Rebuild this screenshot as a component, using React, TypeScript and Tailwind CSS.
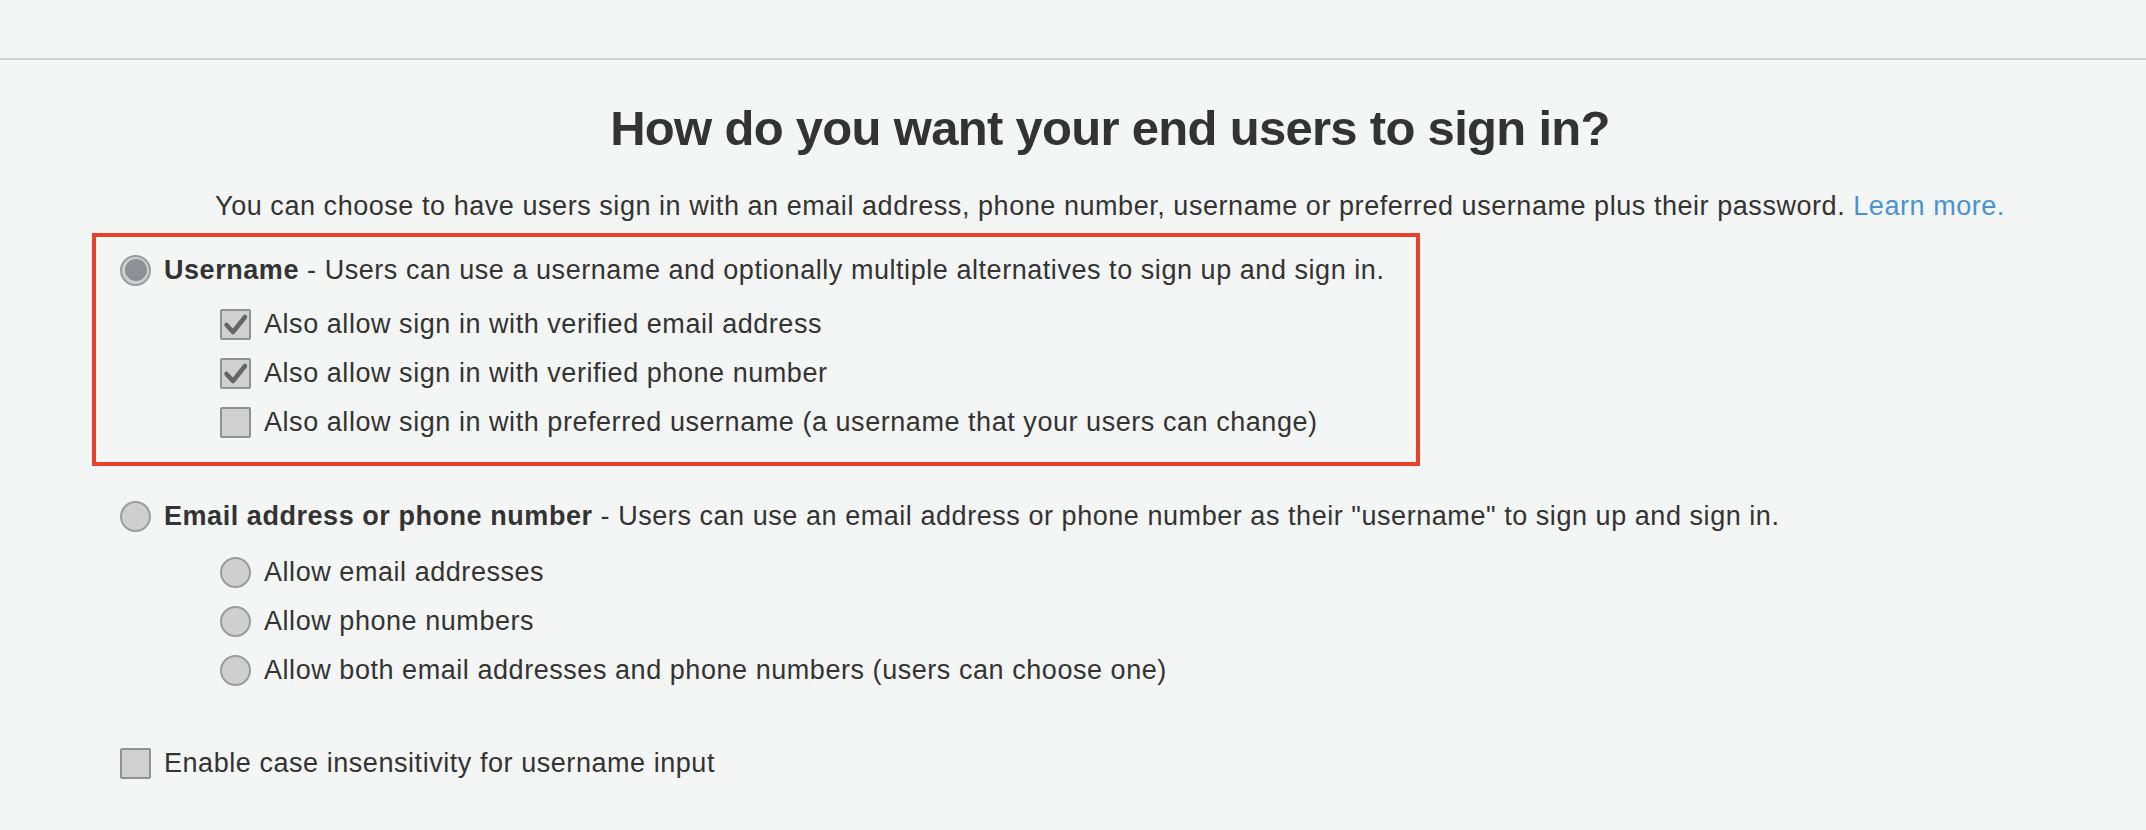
import React from "react";

function Radio({ checked = false }: { checked?: boolean }) {
  return (
    <div className="w-[31px] h-[31px] shrink-0 rounded-full border-2 border-[#9a9c9e] bg-[#cfcfcf] flex items-center justify-center">
      {checked && <div className="w-[22px] h-[22px] rounded-full bg-[#8d9195]" />}
    </div>
  );
}

function Checkbox({ checked = false }: { checked?: boolean }) {
  return (
    <div className="w-[31px] h-[31px] shrink-0 rounded-[2px] border-2 border-[#8f9193] bg-[#d0d0d0] flex items-center justify-center">
      {checked && (
        <svg width="27" height="27" viewBox="0 0 27 27">
          <path d="M4.5 14 L11 21 L23 6" fill="none" stroke="#666" strokeWidth="4.5" strokeLinecap="round" strokeLinejoin="round" />
        </svg>
      )}
    </div>
  );
}

function Row({ control, children }: { control: React.ReactNode; children: React.ReactNode }) {
  return (
    <div className="h-[40px] flex items-center gap-[13px]">
      {control}
      <span className="whitespace-nowrap">{children}</span>
    </div>
  );
}

export default function App() {
  return (
    <div
      className="min-h-screen w-full bg-[#f4f6f5] text-[#333] text-[27px] tracking-[0.55px]"
      style={{ fontFamily: '"Liberation Sans", Arial, Helvetica, sans-serif' }}
    >
      <div className="h-[58px]" />
      <div className="h-[2px] bg-[#cfd0d0]" />
      <div className="pl-[74px] text-center">
        <h1 className="mt-[40px] text-[49px] leading-[56px] font-bold tracking-[-0.7px]">How do you want your end users to sign in?</h1>
        <p className="mt-[35px] leading-[30px]">
          You can choose to have users sign in with an email address, phone number, username or preferred username plus their password.{" "}
          <span className="text-[#4a93d2]">Learn more.</span>
        </p>
      </div>
      <div className="pl-[92px] pb-[40px]">
        <div className="mt-[12px] w-[1328px] border-4 border-[#e8412c] pl-[24px] pt-[13px] pb-[20px]">
          <Row control={<Radio checked />}>
            <b>Username</b> - Users can use a username and optionally multiple alternatives to sign up and sign in.
          </Row>
          <div className="mt-[14px] pl-[100px] flex flex-col gap-[9px]">
            <Row control={<Checkbox checked />}>Also allow sign in with verified email address</Row>
            <Row control={<Checkbox checked />}>Also allow sign in with verified phone number</Row>
            <Row control={<Checkbox />}>Also allow sign in with preferred username (a username that your users can change)</Row>
          </div>
        </div>
        <div className="pl-[28px]">
          <div className="mt-[30px]">
            <Row control={<Radio />}>
              <b>Email address or phone number</b> - Users can use an email address or phone number as their "username" to sign up and sign in.
            </Row>
          </div>
          <div className="mt-[16px] pl-[100px] flex flex-col gap-[9px]">
            <Row control={<Radio />}>Allow email addresses</Row>
            <Row control={<Radio />}>Allow phone numbers</Row>
            <Row control={<Radio />}>Allow both email addresses and phone numbers (users can choose one)</Row>
          </div>
          <div className="mt-[53px]">
            <Row control={<Checkbox />}>Enable case insensitivity for username input</Row>
          </div>
        </div>
      </div>
    </div>
  );
}
